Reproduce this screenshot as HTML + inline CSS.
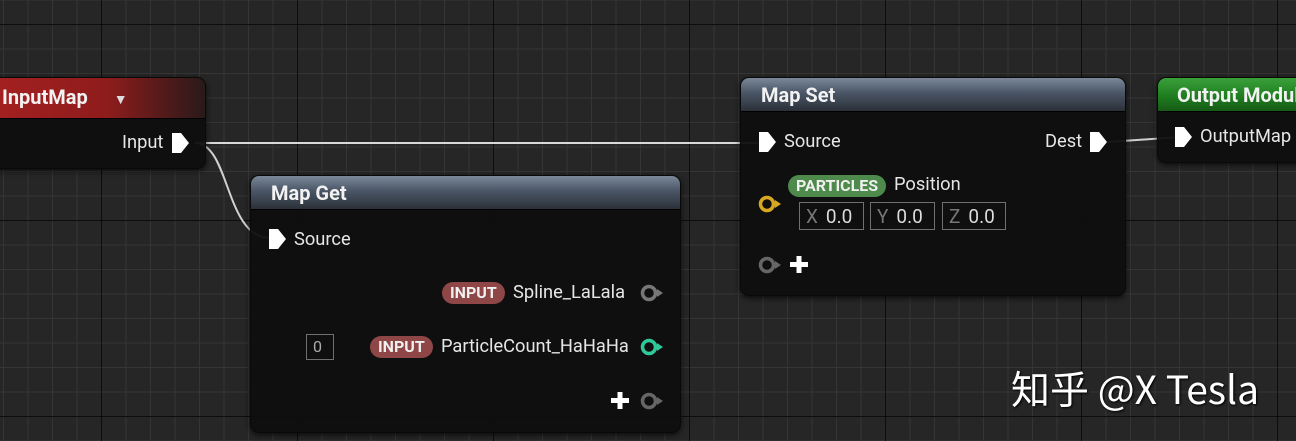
<!DOCTYPE html>
<html><head><meta charset="utf-8"><style>
*{margin:0;padding:0;box-sizing:border-box}
html,body{width:1296px;height:441px;overflow:hidden}
body{position:relative;background-color:#262626;
background-image:
linear-gradient(90deg,rgba(0,0,0,.75) 1px,transparent 1px),
linear-gradient(0deg,rgba(0,0,0,.75) 1px,transparent 1px),
linear-gradient(90deg,#353535 1px,transparent 1px),
linear-gradient(0deg,#353535 1px,transparent 1px);
background-size:196px 196px,196px 196px,24.5px 24.5px,24.5px 24.5px;
background-position:101px 0,0 25px,3px 0,0 0.5px;
font-family:"Roboto","Liberation Sans",sans-serif;color:#e8e8e8}
.node{position:absolute;background:rgba(14,14,14,.95);border-radius:9px;box-shadow:0 2px 6px rgba(0,0,0,.7);border:1px solid #090909;overflow:hidden}
.hd{height:34px;font-weight:bold;font-size:20px;color:#f2f2f2;padding:5px 0 0 20px;border-bottom:1px solid #000;white-space:nowrap}
.blue{background:linear-gradient(180deg,#7b8899 0%,#4a5666 45%,#2b3038 100%)}
.abs{position:absolute}
.lbl{position:absolute;font-size:18.3px;color:#e6e6e6;white-space:nowrap}
.tag{position:absolute;height:22px;border-radius:11px;font-size:16px;font-weight:bold;color:#f0f0f0;padding:1px 8px;white-space:nowrap;line-height:20px}
.red{background:#8e4646}.grn{background:#4d8a4b}
.box{position:absolute;height:28px;border:1px solid #707070;font-size:19px;color:#ddd;padding:2px 0 0 6px;white-space:nowrap}
.box span{color:#777;margin-right:8px}
</style></head><body>
<svg class="abs" style="left:0;top:0" width="1296" height="441">
<path d="M195 143 L760 143" stroke="#d8d8d8" stroke-width="2" fill="none"/>
<path d="M195 143 C230 143,225 238,270 238" stroke="#d0d0d0" stroke-width="2" fill="none"/>
<path d="M1108 142 L1180 137" stroke="#d0d0d0" stroke-width="2" fill="none"/>
</svg>

<div class="node" style="left:-12px;top:77px;width:218px;height:92px">
<div class="hd" style="height:41px;background:linear-gradient(90deg,#a52020 0%,#8e1c1c 55%,#4a1a1a 85%,#2a1a1a 100%);padding:7px 0 0 13px">InputMap<span style="font-size:14px;margin-left:26px;color:#ddd">▼</span></div>
</div>
<div class="lbl" style="left:122px;top:132px">Input</div>

<div class="node" style="left:250px;top:175px;width:431px;height:258px"><div class="hd blue">Map Get</div></div>
<div class="lbl" style="left:294px;top:229px">Source</div>
<div class="tag red" style="left:442px;top:282px">INPUT</div>
<div class="lbl" style="left:513px;top:282px">Spline_LaLala</div>
<div class="box" style="left:306px;top:334px;width:28px;height:26px;font-size:16px;color:#aaa">0</div>
<div class="tag red" style="left:370px;top:336px">INPUT</div>
<div class="lbl" style="left:441px;top:336px">ParticleCount_HaHaHa</div>

<div class="node" style="left:740px;top:77px;width:386px;height:219px"><div class="hd blue">Map Set</div></div>
<div class="lbl" style="left:784px;top:131px">Source</div>
<div class="lbl" style="left:1045px;top:131px">Dest</div>
<div class="tag grn" style="left:788px;top:175px">PARTICLES</div>
<div class="lbl" style="left:894px;top:174px">Position</div>
<div class="box" style="left:799px;top:202px;width:65px"><span>X</span>0.0</div>
<div class="box" style="left:870px;top:202px;width:65px"><span>Y</span>0.0</div>
<div class="box" style="left:942px;top:202px;width:64px"><span>Z</span>0.0</div>

<div class="node" style="left:1157px;top:77px;width:160px;height:86px"><div class="hd" style="background:linear-gradient(180deg,#3aa03a 0%,#1d7a1d 60%,#175a17 100%);padding-left:19px">Output Module</div></div>
<div class="lbl" style="left:1200px;top:126px">OutputMap</div>

<svg class="abs" style="left:0;top:0" width="1296" height="441">
<defs><path id="ex" d="M1 0 H10 L18 10 L10 20 H1 Z" fill="#fff"/></defs>
<use href="#ex" x="171" y="133"/>
<use href="#ex" x="268" y="229"/>
<use href="#ex" x="758" y="132"/>
<use href="#ex" x="1089" y="132"/>
<use href="#ex" x="1174" y="127"/>
<g fill="none" stroke-width="3.5">
<circle cx="649" cy="293" r="6.5" stroke="#777"/>
<circle cx="649" cy="347" r="6.5" stroke="#2fc89a"/>
<circle cx="649" cy="401" r="6.5" stroke="#666"/>
<circle cx="767" cy="204" r="6.5" stroke="#d8a820"/>
<circle cx="767" cy="265" r="6.5" stroke="#666"/>
</g>
<g>
<path d="M657 289 L663 293 L657 297Z" fill="#777"/>
<path d="M657 343 L663 347 L657 351Z" fill="#2fc89a"/>
<path d="M657 397 L663 401 L657 405Z" fill="#666"/>
<path d="M775 200 L781 204 L775 208Z" fill="#d8a820"/>
<path d="M775 261 L781 265 L775 269Z" fill="#666"/>
</g>
<g fill="#fff"><rect x="611" y="398" width="18" height="5"/><rect x="617.5" y="392" width="5" height="17"/>
<rect x="790" y="262" width="18" height="5"/><rect x="796.5" y="256" width="5" height="17"/></g>
</svg>

<div class="abs" style="left:1011px;top:360px;font-size:39px;color:#fff;text-shadow:1px 1px 2px #000;white-space:nowrap;font-family:'Noto Sans CJK SC',sans-serif">知乎 @X Tesla</div>
</body></html>
